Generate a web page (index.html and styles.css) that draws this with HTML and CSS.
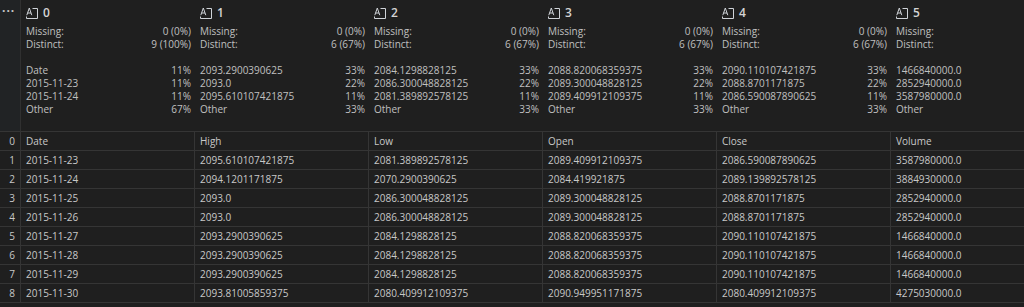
FILE: index.html
```html
<!DOCTYPE html>
<html>
<head>
<meta charset="utf-8">
<link rel="stylesheet" href="styles.css">
</head>
<body>
<div class="grid">
  <div class="gutter-head"><span class="dots">···</span></div>
</div>
<script src="app.js"></script>
</body>
</html>
```
FILE: app.js
```js
const cols = [
  {name:"0", missing:"0 (0%)", distinct:"9 (100%)", top:[["Date","11%"],["2015-11-23","11%"],["2015-11-24","11%"],["Other","67%"]]},
  {name:"1", missing:"0 (0%)", distinct:"6 (67%)", top:[["2093.2900390625","33%"],["2093.0","22%"],["2095.610107421875","11%"],["Other","33%"]]},
  {name:"2", missing:"0 (0%)", distinct:"6 (67%)", top:[["2084.1298828125","33%"],["2086.300048828125","22%"],["2081.389892578125","11%"],["Other","33%"]]},
  {name:"3", missing:"0 (0%)", distinct:"6 (67%)", top:[["2088.820068359375","33%"],["2089.300048828125","22%"],["2089.409912109375","11%"],["Other","33%"]]},
  {name:"4", missing:"0 (0%)", distinct:"6 (67%)", top:[["2090.110107421875","33%"],["2088.8701171875","22%"],["2086.590087890625","11%"],["Other","33%"]]},
  {name:"5", missing:"0 (0%)", distinct:"6 (67%)", top:[["1466840000.0","33%"],["2852940000.0","22%"],["3587980000.0","11%"],["Other","33%"]]}
];
const rows = [
  ["Date","High","Low","Open","Close","Volume"],
  ["2015-11-23","2095.610107421875","2081.389892578125","2089.409912109375","2086.590087890625","3587980000.0"],
  ["2015-11-24","2094.1201171875","2070.2900390625","2084.419921875","2089.139892578125","3884930000.0"],
  ["2015-11-25","2093.0","2086.300048828125","2089.300048828125","2088.8701171875","2852940000.0"],
  ["2015-11-26","2093.0","2086.300048828125","2089.300048828125","2088.8701171875","2852940000.0"],
  ["2015-11-27","2093.2900390625","2084.1298828125","2088.820068359375","2090.110107421875","1466840000.0"],
  ["2015-11-28","2093.2900390625","2084.1298828125","2088.820068359375","2090.110107421875","1466840000.0"],
  ["2015-11-29","2093.2900390625","2084.1298828125","2088.820068359375","2090.110107421875","1466840000.0"],
  ["2015-11-30","2093.81005859375","2080.409912109375","2090.949951171875","2080.409912109375","4275030000.0"]
];
const icon = '<svg class="ico" width="12" height="12" viewBox="0 0 12 12" fill="none" stroke="#cfd3d8" stroke-width="1"><path d="M0.8 8.2 L3.3 1 L5.8 8.2 M1.6 6 H5"/><path d="M6.5 1.5 H11.5 V11.5 H0.5 V9.5"/></svg>';
const grid = document.querySelector('.grid');
let html = '';
cols.forEach(c => {
  html += '<div class="hcell"><div class="title">' + icon + '<span>' + c.name + '</span></div>' +
    '<div class="stat"><span>Missing:</span><span>' + c.missing + '</span></div>' +
    '<div class="stat"><span>Distinct:</span><span>' + c.distinct + '</span></div>' +
    '<div class="stat blank"></div>' +
    c.top.map(t => '<div class="stat"><span>' + t[0] + '</span><span>' + t[1] + '</span></div>').join('') +
    '</div>';
});
rows.forEach((r, i) => {
  html += '<div class="idx">' + i + '</div>' + r.map(v => '<div class="cell">' + v + '</div>').join('');
});
grid.insertAdjacentHTML('beforeend', html);
```
FILE: styles.css
```css
html, body {
  margin: 0;
  padding: 0;
  background: #1f1f1f;
  overflow: hidden;
}
body {
  width: 1024px;
  height: 307px;
  font-family: "Open Sans", "Noto Sans", sans-serif;
  font-size: 10px;
  color: #cccccc;
}
.grid {
  display: grid;
  grid-template-columns: 21px repeat(6, 174px);
  grid-auto-rows: min-content;
  width: 1066px;
}
.gutter-head {
  height: 131px;
  background: #212325;
  border-right: 1px solid #303030;
  border-bottom: 1px solid #353535;
  box-sizing: content-box;
  width: 20px;
}
.dots {
  display: block;
  padding: 3px 0 0 2px;
  font-size: 12px;
  letter-spacing: 1px;
  line-height: 16px;
  color: #c8c8c8;
  font-weight: bold;
}
.hcell {
  height: 127px;
  border-bottom: 1px solid #353535;
  padding: 4px 4px 0 5px;
  box-sizing: content-box;
  width: 165px;
  background: #1f1f1f;
}
.title {
  display: flex;
  align-items: center;
  gap: 5px;
  height: 17px;
  margin-bottom: 4px;
  font-size: 12px;
  font-weight: 600;
  color: #d4d4d4;
}
.ico {
  margin-top: 1px;
}
.stat {
  display: flex;
  justify-content: space-between;
  height: 13px;
  line-height: 13px;
  color: #c0c0c0;
  white-space: nowrap;
}
.idx {
  height: 18px;
  line-height: 18px;
  text-align: right;
  padding-right: 5px;
  border-right: 1px solid #353535;
  border-bottom: 1px solid #353535;
  color: #c8c8c8;
  background: #1f1f1f;
}
.cell {
  height: 18px;
  line-height: 18px;
  padding-left: 5px;
  border-right: 1px solid #353535;
  border-bottom: 1px solid #353535;
  white-space: nowrap;
  overflow: hidden;
  color: #c8c8c8;
}
```
